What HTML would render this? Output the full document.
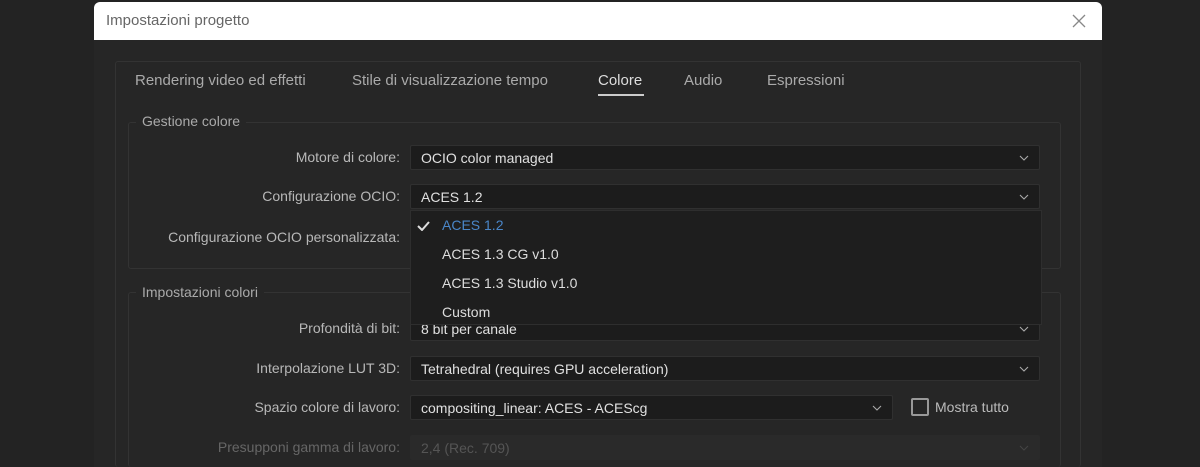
<!DOCTYPE html>
<html><head><style>
*{margin:0;padding:0;box-sizing:border-box}
html,body{width:1200px;height:467px;overflow:hidden}
body{background:#232323;font-family:"Liberation Sans",sans-serif;font-size:14px;color:#c8c8c8;position:relative}
.abs{position:absolute}
.dlg{left:94px;top:2px;width:1008px;height:465px;background:#262626;border-radius:6px 6px 0 0;overflow:hidden}
.title{left:0;top:0;width:1008px;height:38px;background:#fff;color:#666;font-size:15px;padding:10px 12px}
.box{border:1px solid #333;border-radius:3px;border-bottom:none}
.lbl{text-align:right;width:400px;left:0;color:#b8b8b8;font-size:14px}
.dd{background:#1c1c1c;border:1px solid #303030;border-radius:2px;height:25px;padding:4px 10px;color:#e0e0e0;font-size:14px}
.chev{position:absolute;right:10px;top:9px;width:10px;height:6px}
</style></head><body>
<div class="abs dlg">
 <div class="abs title">Impostazioni progetto<svg class="abs" style="right:16px;top:12px" width="14" height="14"><path d="M1 1L13 13M13 1L1 13" stroke="#888" stroke-width="1.3"/></svg></div>
</div>
<div class="abs box" style="left:115px;top:61px;width:966px;height:406px"></div>
<div class="abs" style="left:135px;top:72px;font-size:15px;color:#aaa">Rendering video ed effetti</div>
<div class="abs" style="left:352px;top:72px;font-size:15px;color:#aaa">Stile di visualizzazione tempo</div>
<div class="abs" style="left:598px;top:72px;font-size:15px;color:#ddd">Colore</div>
<div class="abs" style="left:598px;top:94px;width:46px;height:2px;background:#ccc"></div>
<div class="abs" style="left:684px;top:72px;font-size:15px;color:#aaa">Audio</div>
<div class="abs" style="left:767px;top:72px;font-size:15px;color:#aaa">Espressioni</div>

<div class="abs box" style="left:128px;top:122px;width:933px;height:147px;border-bottom:1px solid #333"></div>
<div class="abs" style="left:136px;top:113px;background:#262626;padding:0 6px;color:#aaa">Gestione colore</div>
<div class="abs lbl" style="top:149px">Motore di colore:</div>
<div class="abs dd" style="left:410px;top:145px;width:630px">OCIO color managed<svg class="chev"><path d="M1 1L5 5L9 1" fill="none" stroke="#aaa" stroke-width="1.1"/></svg></div>
<div class="abs lbl" style="top:188px">Configurazione OCIO:</div>
<div class="abs dd" style="left:410px;top:184px;width:630px">ACES 1.2<svg class="chev"><path d="M1 1L5 5L9 1" fill="none" stroke="#aaa" stroke-width="1.1"/></svg></div>
<div class="abs lbl" style="top:229px">Configurazione OCIO personalizzata:</div>

<div class="abs box" style="left:128px;top:292px;width:933px;height:175px"></div>
<div class="abs" style="left:136px;top:284px;background:#262626;padding:0 6px;color:#aaa">Impostazioni colori</div>
<div class="abs lbl" style="top:320px">Profondità di bit:</div>
<div class="abs dd" style="left:410px;top:316px;width:630px">8 bit per canale<svg class="chev"><path d="M1 1L5 5L9 1" fill="none" stroke="#aaa" stroke-width="1.1"/></svg></div>
<div class="abs lbl" style="top:360px">Interpolazione LUT 3D:</div>
<div class="abs dd" style="left:410px;top:356px;width:630px">Tetrahedral (requires GPU acceleration)<svg class="chev"><path d="M1 1L5 5L9 1" fill="none" stroke="#aaa" stroke-width="1.1"/></svg></div>
<div class="abs lbl" style="top:399px">Spazio colore di lavoro:</div>
<div class="abs dd" style="left:410px;top:395px;width:483px">compositing_linear: ACES - ACEScg<svg class="chev"><path d="M1 1L5 5L9 1" fill="none" stroke="#aaa" stroke-width="1.1"/></svg></div>
<div class="abs" style="left:911px;top:398px;width:18px;height:18px;border:2px solid #999;border-radius:2px"></div>
<div class="abs" style="left:935px;top:399px;color:#bbb">Mostra tutto</div>
<div class="abs lbl" style="top:439px;color:#666">Presupponi gamma di lavoro:</div>
<div class="abs dd" style="left:410px;top:435px;width:630px;background:#2a2a2a;color:#555;border-color:#2a2a2a">2,4 (Rec. 709)<svg class="chev"><path d="M1 1L5 5L9 1" fill="none" stroke="#444" stroke-width="1.1"/></svg></div>

<div class="abs" style="left:410px;top:210px;width:632px;height:115px;background:#1e1e1e;border:1px solid #2e2e2e">
 <svg class="abs" style="left:6px;top:10px" width="13" height="10"><path d="M1 5L5 9L12 1" fill="none" stroke="#ddd" stroke-width="2"/></svg>
 <div class="abs" style="left:31px;top:6px;color:#4a86c8">ACES 1.2</div>
 <div class="abs" style="left:31px;top:35px;color:#ddd">ACES 1.3 CG v1.0</div>
 <div class="abs" style="left:31px;top:64px;color:#ddd">ACES 1.3 Studio v1.0</div>
 <div class="abs" style="left:31px;top:93px;color:#ddd">Custom</div>
</div>
</body></html>
